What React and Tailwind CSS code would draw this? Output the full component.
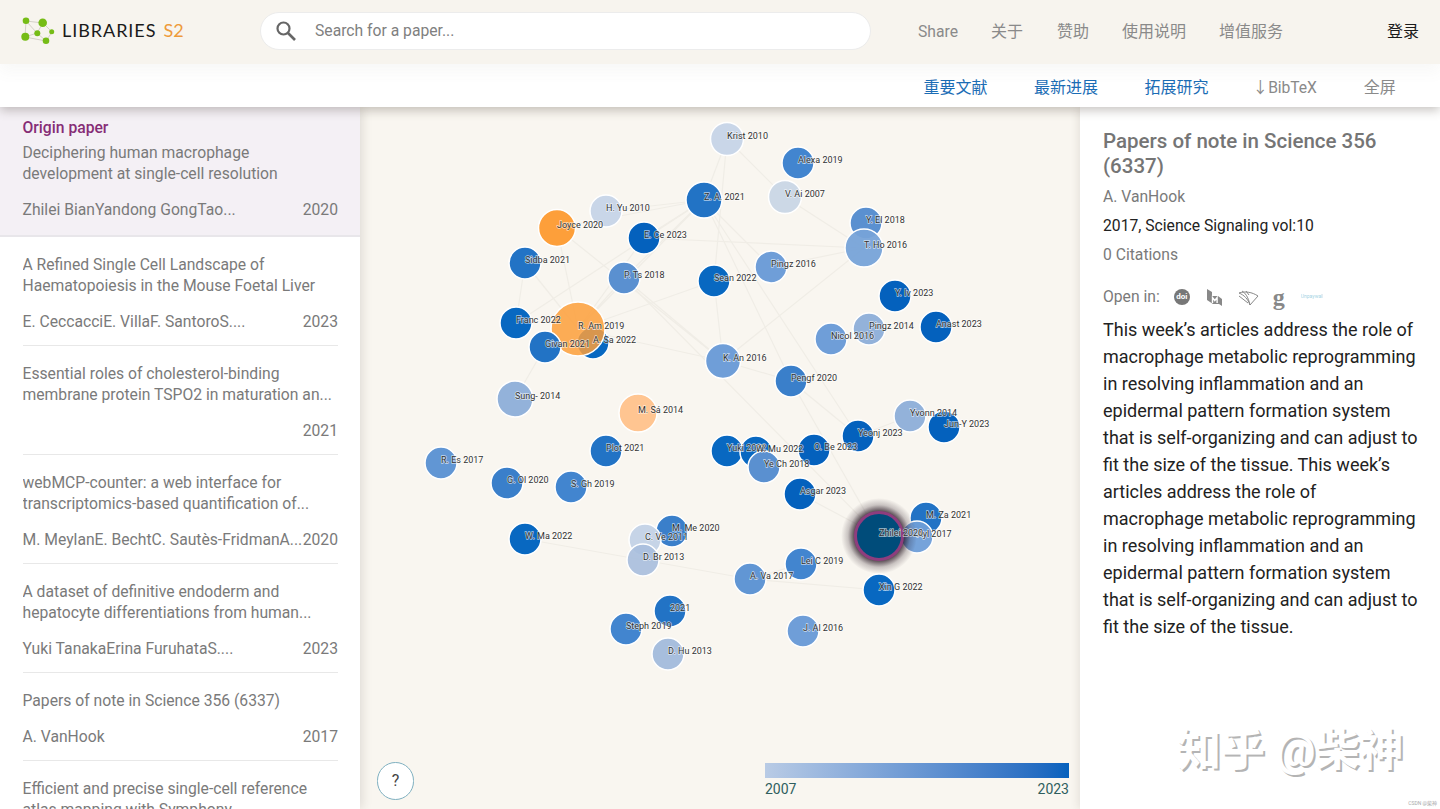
import React from "react";

const year = {
  2023: "#0461bd", 2022: "#0868c1", 2021: "#2273c5", 2020: "#3a7fca", 2019: "#4285cf",
  2018: "#5a90d0", 2017: "#6196d4", 2016: "#6f9ed8", 2014: "#93b2da", 2013: "#a7bedd",
  2011: "#c0d0e6", 2010: "#c9d6e8", 2007: "#ccd8e6",
};

// name, cx, cy, r, optional fill, optional opacity - order is paint order
const nodes = [
  ["Krist 2010", 727, 139, 16.5],
  ["Alexa 2019", 798, 163, 16],
  ["V. Ai 2007", 785, 197, 16.5],
  ["Z. A. 2021", 704, 200, 18],
  ["H. Yu 2010", 606, 211, 16],
  ["Joyce 2020", 557, 228, 18.5, "#fd9f3a"],
  ["E. Ce 2023", 644, 238, 16],
  ["Y. El 2018", 866, 223, 16],
  ["T. Ho 2016", 864, 248, 19, "#77a3d8", 0.95],
  ["Pingz 2016", 771, 267, 16],
  ["Sidba 2021", 525, 263, 16],
  ["P. Ts 2018", 624, 278, 16],
  ["Sean 2022", 714, 281, 16],
  ["Y. Iv 2023", 895, 296, 16],
  ["Franc 2022", 516, 323, 16],
  ["A. Sa 2022", 593, 343, 16],
  ["R. Am 2019", 578, 329, 27, "#fd9f3a", 0.85],
  ["Givan 2021", 545, 347, 16],
  ["K. An 2016", 723, 361, 17.5],
  ["Nicol 2016", 831, 339, 16],
  ["Pingz 2014", 869, 329, 16],
  ["Anast 2023", 936, 327, 16],
  ["Pengf 2020", 791, 381, 16],
  ["Sung- 2014", 515, 399, 18],
  ["M. Sá 2014", 638, 413, 19, "#ffc591"],
  ["Yvonn 2014", 910, 416, 16],
  ["Jun-Y 2023", 944, 427, 16],
  ["Yeonj 2023", 858, 436, 16],
  ["Plot 2021", 606, 451, 16],
  ["Yuki 2022", 727, 451, 16],
  ["W. Mu 2022", 756, 452, 16],
  ["Ye Ch 2018", 764, 467, 16],
  ["O. Be 2023", 814, 450, 16],
  ["R. Es 2017", 441, 463, 16],
  ["G. Ol 2020", 507, 483, 16],
  ["S. Gh 2019", 571, 487, 16],
  ["Asgar 2023", 800, 494, 16],
  ["M. Za 2021", 926, 518, 16],
  ["Ayl 2017", 917, 537, 16, "#6f9ed8", 0.95],
  ["W. Ma 2022", 525, 539, 16],
  ["M. Me 2020", 672, 531, 16],
  ["C. Ve 2011", 645, 540, 16, "#c0d0e6", 0.9],
  ["D. Br 2013", 643, 560, 16, "#a7bedd", 0.9],
  ["Lei C 2019", 801, 564, 16],
  ["A. Va 2017", 750, 579, 16],
  ["Xin G 2022", 879, 590, 16],
  ["2021", 670, 611, 16],
  ["Steph 2019", 626, 629, 16],
  ["J. Al 2016", 803, 631, 16],
  ["D. Hu 2013", 668, 654, 16],
];

const links = [
  ["Krist 2010", "Z. A. 2021"], ["Krist 2010", "V. Ai 2007"], ["Krist 2010", "Sean 2022"],
  ["V. Ai 2007", "T. Ho 2016"], ["Z. A. 2021", "H. Yu 2010"], ["Z. A. 2021", "Joyce 2020"],
  ["Z. A. 2021", "E. Ce 2023"], ["Z. A. 2021", "P. Ts 2018"], ["Z. A. 2021", "R. Am 2019"],
  ["Z. A. 2021", "Franc 2022"], ["Z. A. 2021", "Pengf 2020"], ["Z. A. 2021", "Pingz 2016"],
  ["E. Ce 2023", "T. Ho 2016"], ["T. Ho 2016", "Pingz 2016"], ["T. Ho 2016", "K. An 2016"],
  ["Sidba 2021", "R. Am 2019"], ["Sidba 2021", "Franc 2022"], ["Joyce 2020", "R. Am 2019"],
  ["Joyce 2020", "K. An 2016"], ["P. Ts 2018", "K. An 2016"], ["P. Ts 2018", "R. Am 2019"],
  ["P. Ts 2018", "Zhilei 2020"], ["Sean 2022", "K. An 2016"], ["Sean 2022", "R. Am 2019"],
  ["R. Am 2019", "K. An 2016"], ["E. Ce 2023", "R. Am 2019"], ["Pengf 2020", "Zhilei 2020"],
  ["Pengf 2020", "Yeonj 2023"], ["Z. A. 2021", "Yeonj 2023"],
  ["Asgar 2023", "Zhilei 2020"], ["Givan 2021", "Sung- 2014"], ["W. Ma 2022", "D. Br 2013"],
  ["D. Br 2013", "A. Va 2017"], ["A. Va 2017", "Lei C 2019"], ["A. Va 2017", "Xin G 2022"],
  ["K. An 2016", "Pengf 2020"], ["Yeonj 2023", "Yvonn 2014"],
];

const origin = { cx: 879, cy: 536 };

const papers = [
  { title: "A Refined Single Cell Landscape of Haematopoiesis in the Mouse Foetal Liver", authors: "E. CeccacciE. VillaF. SantoroS....", year: 2023 },
  { title: "Essential roles of cholesterol-binding membrane protein TSPO2 in maturation an...", authors: "", year: 2021 },
  { title: "webMCP-counter: a web interface for transcriptomics-based quantification of...", authors: "M. MeylanE. BechtC. Sautès-FridmanA...", year: 2020 },
  { title: "A dataset of definitive endoderm and hepatocyte differentiations from human...", authors: "Yuki TanakaErina FuruhataS....", year: 2023 },
  { title: "Papers of note in Science 356 (6337)", authors: "A. VanHook", year: 2017 },
  { title: "Efficient and precise single-cell reference atlas mapping with Symphony", authors: "", year: 2021 },
];

const position = (name) => {
  if (name === "Zhilei 2020") return origin;
  const n = nodes.find((item) => item[0] === name);
  return { cx: n[1], cy: n[2] };
};

function Logo() {
  const dots = [[26, 20.7, 3.3], [42.7, 22.7, 4.3], [25.3, 36.7, 4], [37.3, 33.3, 3], [51.7, 31.7, 2.5], [46, 40.7, 3.3]];
  return (
    <svg width="36" height="30" viewBox="20 16 36 30" className="shrink-0">
      <path d="M26 21L43 23L52 32L46 41L37 33L25 37L26 21L37 33L43 23M25 37L46 41" stroke="#c4c0b8" strokeWidth="0.7" fill="none" />
      {dots.map(([x, y, r]) => (
        <circle key={`${x}-${y}`} cx={x} cy={y} r={r} fill="#76bc16" />
      ))}
    </svg>
  );
}

function Header() {
  return (
    <header className="relative z-30 flex h-[64px] shrink-0 items-center bg-[#f7f4ee] shadow-[0_8px_14px_rgba(120,110,90,0.05)]">
      <div className="mb-[3px] ml-[20px] flex w-[240px] items-center gap-[6px]">
        <Logo />
        <span className="font-['Lato',sans-serif] text-[18px] tracking-[0.95px] text-[#1a1a1a]">LIBRARIES</span>
        <span className="ml-[1px] font-['Lato',sans-serif] text-[18px] text-[#ee9a3a]">S2</span>
      </div>
      <div className="mb-[2px] flex h-[38px] w-[611px] items-center rounded-full border border-[#ececec] bg-white pl-[14px]">
        <svg width="22" height="22" viewBox="0 0 22 22" fill="none" stroke="#666" strokeWidth="2.2" className="shrink-0">
          <circle cx="8.5" cy="8.5" r="6" />
          <path d="M13 13l7 7" strokeWidth="2.6" />
        </svg>
        <span className="ml-[18px] text-[15.7px] text-[#808080]">Search for a paper...</span>
      </div>
      <nav className="flex text-[16px] text-[#8a8a8a]">
        <span className="ml-[47px] text-[15.7px]">Share</span>
        <span className="ml-[33px]">关于</span>
        <span className="ml-[34px]">赞助</span>
        <span className="ml-[33px]">使用说明</span>
        <span className="ml-[33px]">增值服务</span>
      </nav>
      <span className="ml-[104px] text-[16px] text-[#1a1a1a]">登录</span>
    </header>
  );
}

function SubNav() {
  return (
    <div className="relative z-20 flex h-[43px] shrink-0 items-center bg-white pl-[923.5px] pt-[5px] text-[16px] shadow-[0_3px_10px_rgba(60,50,40,0.3)]">
      <span className="text-[#1b6db5]">重要文献</span>
      <span className="ml-[46.5px] text-[#1b6db5]">最新进展</span>
      <span className="ml-[46.5px] text-[#1b6db5]">拓展研究</span>
      <span className="ml-[44px] text-[15.7px] tracking-[-0.1px] text-[#8a8a8a]">↓BibTeX</span>
      <span className="ml-[47px] text-[#8a8a8a]">全屏</span>
    </div>
  );
}

function PaperRow({ paper }) {
  return (
    <div className="ml-[22.5px] mr-[22px] border-b border-[#e8e8e8] pt-[17px] pb-[13.5px] text-[15.7px] leading-[21px] text-[#7a7a7a]">
      <div className="line-clamp-2">{paper.title}</div>
      <div className="mt-[14.5px] flex justify-between whitespace-nowrap">
        <span>{paper.authors}</span>
        <span>{paper.year}</span>
      </div>
    </div>
  );
}

function Sidebar() {
  return (
    <aside className="relative z-10 w-[360px] shrink-0 overflow-hidden bg-white shadow-[2px_0_10px_rgba(60,50,40,0.14)]">
      <div className="h-[130px] border-b-2 border-[#e8e6ea] bg-[#f4f0f5] pl-[22.5px] pr-[22px] pt-[10px] text-[15.7px] leading-[21px] text-[#7a7a7a]">
        <div className="font-medium text-[#862d76]">Origin paper</div>
        <div className="mt-[4px]">
          Deciphering human macrophage
          <br />
          development at single-cell resolution
        </div>
        <div className="mt-[15px] flex justify-between">
          <span>Zhilei BianYandong GongTao...</span>
          <span>2020</span>
        </div>
      </div>
      {papers.map((paper) => (
        <PaperRow key={paper.title} paper={paper} />
      ))}
    </aside>
  );
}

function Graph() {
  return (
    <svg viewBox="360 107 720 702" className="h-full w-full">
      <defs>
        <radialGradient id="glow">
          <stop offset="0.66" stopColor="#20101c" stopOpacity="0.7" />
          <stop offset="0.82" stopColor="#20101c" stopOpacity="0.22" />
          <stop offset="1" stopColor="#20101c" stopOpacity="0" />
        </radialGradient>
      </defs>
      <g stroke="#f0ede6" strokeWidth="1.2">
        {links.map(([a, b]) => {
          const from = position(a);
          const to = position(b);
          return <line key={`${a}-${b}`} x1={from.cx} y1={from.cy} x2={to.cx} y2={to.cy} />;
        })}
      </g>
      {nodes.map(([name, cx, cy, r, fill, opacity]) => (
        <circle
          key={name}
          cx={cx}
          cy={cy}
          r={r}
          fill={fill || year[name.slice(-4)]}
          fillOpacity={opacity || 1}
          stroke="#fff"
          strokeWidth="1.5"
        />
      ))}
      <circle cx={origin.cx} cy={origin.cy} r="38" fill="url(#glow)" />
      <circle cx={origin.cx} cy={origin.cy} r="23.5" fill="#004c7a" stroke="#8e3d7e" strokeWidth="3" />
      <g fontSize="9" fill="#333" stroke="#fff" strokeOpacity="0.65" strokeWidth="1.4" style={{ paintOrder: "stroke" }}>
        {nodes.map(([name, cx, cy]) => (
          <text key={name} x={cx} y={cy}>
            {name}
          </text>
        ))}
        <text x={origin.cx} y={origin.cy}>Zhilei 2020</text>
      </g>
    </svg>
  );
}

function OpenIn() {
  return (
    <div className="mt-[16px] flex h-[24px] items-center text-[15.7px] text-[#7a7a7a]">
      <span>Open in:</span>
      <span className="ml-[14px] flex h-[16px] w-[16px] items-center justify-center rounded-full bg-[#777] text-[8px] font-bold text-white">
        doi
      </span>
      <svg width="17" height="17" viewBox="0 0 17 17" className="ml-[16px]" fill="#888">
        <path d="M1 0l5 3v4h6l4 3v7l-3-2H7l-6-4z" />
        <path d="M6.5 14V8.5l2.3 3 2.3-3V14" fill="none" stroke="#fff" strokeWidth="1.4" />
      </svg>
      <svg width="21" height="17" viewBox="0 0 21 17" className="ml-[15px]" fill="none" stroke="#888" strokeWidth="1">
        <path d="M1 4c6-2 13-1 19 3l-8 9C10 10 6 6 1 4zM4 2c3 2 6 5 8 14M1 7l9 7M8 2l3 4" />
      </svg>
      <span className="ml-[14px] w-[18px] font-['Liberation_Serif',serif] text-[24px] font-bold leading-[18px] text-[#888]">g</span>
      <span className="ml-[10px] w-[22px] overflow-hidden text-[5px] whitespace-nowrap text-[#a6d4e4]">Unpaywall</span>
    </div>
  );
}

function Details() {
  return (
    <aside className="relative z-10 w-[360px] shrink-0 bg-white pl-[23px] pr-[20px] pt-[22px] shadow-[-2px_0_8px_rgba(60,50,40,0.1)]">
      <h2 className="text-[20.5px] font-medium leading-[25px] text-[#757575]">Papers of note in Science 356 (6337)</h2>
      <div className="mt-[3px] text-[15.7px] leading-[29px] text-[#7a7a7a]">
        <div>A. VanHook</div>
        <div className="text-[#222]">2017, Science Signaling vol:10</div>
        <div>0 Citations</div>
      </div>
      <OpenIn />
      <p className="mt-[7px] text-[18px] leading-[27px] text-[#222]">
        This week’s articles address the role of macrophage metabolic reprogramming in resolving inflammation and an epidermal pattern formation system that is self-organizing and can adjust to fit the size of the tissue. This week’s articles address the role of macrophage metabolic reprogramming in resolving inflammation and an epidermal pattern formation system that is self-organizing and can adjust to fit the size of the tissue.
      </p>
      <div className="absolute left-[97px] top-[614px] text-[44px] font-bold leading-[60px] whitespace-nowrap text-white [text-shadow:2px_2px_0_#b4b4b4]">
        知乎 @柴神
      </div>
      <div className="absolute bottom-[2px] right-[3px] text-[5px] text-[#aaa]">CSDN @柴神</div>
    </aside>
  );
}

export default function App() {
  return (
    <div className="flex h-[809px] w-[1440px] flex-col overflow-hidden bg-white font-[Roboto,'Noto_Sans_CJK_SC',sans-serif]">
      <Header />
      <SubNav />
      <div className="flex min-h-0 flex-1">
        <Sidebar />
        <main className="relative min-w-0 flex-1 bg-[#f9f6f0]">
          <Graph />
          <button className="absolute bottom-[9px] left-[17px] flex h-[38px] w-[37px] items-center justify-center rounded-full border border-[#7fb0c0] bg-white text-[16px] text-[#444]">
            ?
          </button>
          <div className="absolute left-[405px] top-[656px] w-[304px]">
            <div className="h-[15px] bg-gradient-to-r from-[#b9cbe5] to-[#0461bd]"></div>
            <div className="mt-[2px] flex justify-between text-[14px] leading-[18px] text-[#2f5e5e]">
              <span>2007</span>
              <span>2023</span>
            </div>
          </div>
        </main>
        <Details />
      </div>
    </div>
  );
}
